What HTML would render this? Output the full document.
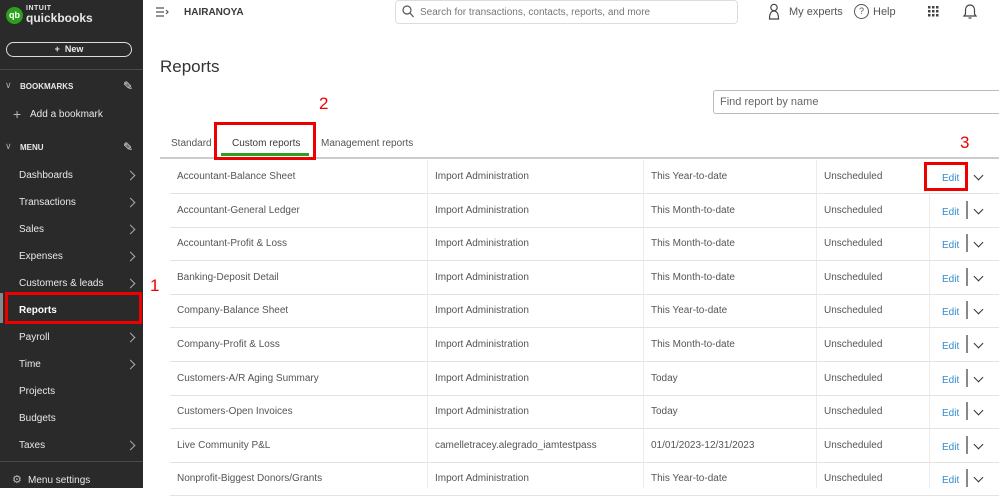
<!DOCTYPE html>
<html><head><meta charset="utf-8">
<style>
*{box-sizing:border-box;margin:0;padding:0}
body{width:999px;height:488px;overflow:hidden;font-family:"Liberation Sans",sans-serif;background:#fff;position:relative;color:#393a3d}
.sb{position:absolute;left:0;top:0;width:143px;height:488px;background:#2a2a2a;color:#e8e8e8}
.sb .t{position:absolute;font-size:11px}
.chev{position:absolute;left:127px;width:7px;height:7px;border-right:1.2px solid #aaa;border-top:1.2px solid #aaa;transform:rotate(45deg)}
.hl{position:absolute;left:0;width:143px;height:1px;background:#4a4a4a}
.a{position:absolute;font-size:11px;color:#393a3d}
.row{position:absolute;left:170px;width:829px;height:1px;background:#e3e3e3}
.vl{position:absolute;width:1px;background:#ececec}
.c{position:absolute;font-size:10px;color:#555}
.edit{position:absolute;left:942px;font-size:10px;color:#2f8ccf}
.dv{position:absolute;left:966px;width:1.5px;height:18px;background:#888}
.dch{position:absolute;left:975px;width:7px;height:7px;border-right:1.5px solid #333;border-bottom:1.5px solid #333;transform:rotate(45deg)}
.red{position:absolute;border:3px solid #e00;}
.num{position:absolute;color:#e00;font-size:17px}
</style></head><body>
<div class="sb">
  <div style="position:absolute;left:6px;top:7px;width:17px;height:17px;border-radius:50%;background:#2ca01c;color:#fff;font-size:9px;font-weight:bold;text-align:center;line-height:17px">qb</div>
  <div class="t" style="left:26px;top:5px;font-size:7px;font-weight:bold;letter-spacing:.5px">INTUIT</div>
  <div class="t" style="left:26px;top:11px;font-size:12px;font-weight:bold">quickbooks</div>
  <div style="position:absolute;left:6px;top:42px;width:126px;height:15px;border:1.5px solid #ddd;border-radius:8px;font-size:9px;font-weight:bold;text-align:center;line-height:12px">+ &nbsp;New</div>
  <div class="hl" style="top:69px"></div>
  <div class="t" style="left:5px;top:80px;font-size:9px;color:#aaa">&#8744;</div>
  <div class="t" style="left:20px;top:82px;font-size:8px;font-weight:bold">BOOKMARKS</div>
  <div class="t" style="left:123px;top:79px;font-size:12px">&#9998;</div>
  <div class="t" style="left:13px;top:106px;font-size:14px;color:#bbb">+</div>
  <div class="t" style="left:30px;top:109px;font-size:10px">Add a bookmark</div>
  <div class="t" style="left:5px;top:141px;font-size:9px;color:#aaa">&#8744;</div>
  <div class="t" style="left:20px;top:143px;font-size:8px;font-weight:bold">MENU</div>
  <div class="t" style="left:123px;top:140px;font-size:12px">&#9998;</div>
  <div class="t" style="left:19px;top:170px;font-size:10px">Dashboards</div><div class="chev" style="top:172px"></div>
  <div class="t" style="left:19px;top:197px;font-size:10px">Transactions</div><div class="chev" style="top:199px"></div>
  <div class="t" style="left:19px;top:224px;font-size:10px">Sales</div><div class="chev" style="top:226px"></div>
  <div class="t" style="left:19px;top:251px;font-size:10px">Expenses</div><div class="chev" style="top:253px"></div>
  <div class="t" style="left:19px;top:278px;font-size:10px">Customers &amp; leads</div><div class="chev" style="top:280px"></div>
  <div style="position:absolute;left:0;top:293px;width:3px;height:30px;background:#888"></div>
  <div class="t" style="left:19px;top:305px;font-size:10px;font-weight:bold;color:#fff">Reports</div>
  <div class="t" style="left:19px;top:332px;font-size:10px">Payroll</div><div class="chev" style="top:334px"></div>
  <div class="t" style="left:19px;top:359px;font-size:10px">Time</div><div class="chev" style="top:361px"></div>
  <div class="t" style="left:19px;top:386px;font-size:10px">Projects</div>
  <div class="t" style="left:19px;top:413px;font-size:10px">Budgets</div>
  <div class="t" style="left:19px;top:440px;font-size:10px">Taxes</div><div class="chev" style="top:442px"></div>
  <div class="hl" style="top:461px"></div>
  <div class="t" style="left:12px;top:473px;font-size:11px;color:#bbb">&#9881;</div>
  <div class="t" style="left:28px;top:475px;font-size:10px">Menu settings</div>
</div>
<div class="red" style="left:5px;top:292px;width:137px;height:32px"></div>
<div class="num" style="left:150px;top:276px">1</div>

<svg style="position:absolute;left:155px;top:6px" width="14" height="12"><path d="M1 2h8M1 6h8M1 10h8M11 4l2 2-2 2" stroke="#555" stroke-width="1.2" fill="none"/></svg>
<div class="a" style="left:184px;top:7px;font-size:10px;font-weight:bold">HAIRANOYA</div>
<div style="position:absolute;left:395px;top:0;width:343px;height:24px;border:1px solid #ddd;border-radius:4px"></div>
<svg style="position:absolute;left:402px;top:5px" width="12" height="13"><circle cx="5" cy="5" r="4" stroke="#555" stroke-width="1.2" fill="none"/><path d="M8 8l3.5 4" stroke="#555" stroke-width="1.3"/></svg>
<div class="a" style="left:420px;top:7px;font-size:10px;color:#777">Search for transactions, contacts, reports, and more</div>
<svg style="position:absolute;left:768px;top:3px" width="12" height="17"><circle cx="6" cy="4.5" r="3.2" stroke="#444" stroke-width="1.2" fill="none"/><path d="M6 8c-3 0-4.5 3-4.5 8h9c0-5-1.5-8-4.5-8z" stroke="#444" stroke-width="1.2" fill="none"/></svg>
<div class="a" style="left:789px;top:6px;font-size:11px;color:#555">My experts</div>
<div style="position:absolute;left:854px;top:4px;width:15px;height:15px;border:1.3px solid #555;border-radius:50%;font-size:9px;text-align:center;line-height:13px;color:#555">?</div>
<div class="a" style="left:873px;top:6px;font-size:11px;color:#555">Help</div>
<svg style="position:absolute;left:928px;top:6px" width="11" height="11" fill="#444"><rect x="0" y="0" width="2.5" height="2.5"/><rect x="4" y="0" width="2.5" height="2.5"/><rect x="8" y="0" width="2.5" height="2.5"/><rect x="0" y="4" width="2.5" height="2.5"/><rect x="4" y="4" width="2.5" height="2.5"/><rect x="8" y="4" width="2.5" height="2.5"/><rect x="0" y="8" width="2.5" height="2.5"/><rect x="4" y="8" width="2.5" height="2.5"/><rect x="8" y="8" width="2.5" height="2.5"/></svg>
<svg style="position:absolute;left:963px;top:3px" width="14" height="17"><path d="M7 2c-3 0-4.5 2.5-4.5 5v4L1 13h12l-1.5-2V7C11.5 4.5 10 2 7 2z" stroke="#444" stroke-width="1.2" fill="none"/><path d="M5.5 15h3" stroke="#444" stroke-width="1.2"/></svg>

<div class="a" style="left:160px;top:57px;font-size:17px;color:#333">Reports</div>
<div style="position:absolute;left:713px;top:90px;width:290px;height:24px;border:1px solid #bbb;border-radius:3px"></div>
<div class="a" style="left:720px;top:96px;font-size:11px;color:#666">Find report by name</div>
<div class="num" style="left:319px;top:94px">2</div>
<div class="num" style="left:960px;top:133px">3</div>
<div class="a" style="left:171px;top:138px;font-size:10px;color:#555">Standard</div>
<div class="a" style="left:232px;top:138px;font-size:10px">Custom reports</div>
<div class="a" style="left:321px;top:138px;font-size:10px;color:#555">Management reports</div>
<div style="position:absolute;left:160px;top:157px;width:839px;height:2px;background:#ccc"></div>
<div style="position:absolute;left:221px;top:153px;width:88px;height:3px;background:#2ca01c"></div>
<div class="red" style="left:214px;top:122px;width:102px;height:38px"></div>

<div class="vl" style="left:427px;top:160px;height:328px"></div>
<div class="vl" style="left:643px;top:160px;height:328px"></div>
<div class="vl" style="left:816px;top:160px;height:328px"></div>
<div class="vl" style="left:929px;top:193px;height:295px"></div>

<div id="rows"></div>
<script>
var d=[["Accountant-Balance Sheet","Import Administration","This Year-to-date"],
["Accountant-General Ledger","Import Administration","This Month-to-date"],
["Accountant-Profit & Loss","Import Administration","This Month-to-date"],
["Banking-Deposit Detail","Import Administration","This Month-to-date"],
["Company-Balance Sheet","Import Administration","This Year-to-date"],
["Company-Profit & Loss","Import Administration","This Month-to-date"],
["Customers-A/R Aging Summary","Import Administration","Today"],
["Customers-Open Invoices","Import Administration","Today"],
["Live Community P&L","camelletracey.alegrado_iamtestpass","01/01/2023-12/31/2023"],
["Nonprofit-Biggest Donors/Grants","Import Administration","This Year-to-date"]];
var h="";
d.forEach(function(r,i){
 var y=160+i*33.6;
 var ty=y+11;
 h+='<div class="c" style="left:177px;top:'+ty+'px">'+r[0].replace("&","&amp;")+'</div>';
 h+='<div class="c" style="left:435px;top:'+ty+'px">'+r[1]+'</div>';
 h+='<div class="c" style="left:651px;top:'+ty+'px">'+r[2]+'</div>';
 h+='<div class="c" style="left:824px;top:'+ty+'px">Unscheduled</div>';
 h+='<div class="edit" style="top:'+(ty+2)+'px">Edit</div>';
 if(i>0)h+='<div class="dv" style="top:'+(y+7)+'px"></div>';
 h+='<div class="dch" style="top:'+(y+12)+'px"></div>';
 h+='<div class="row" style="top:'+(y+33)+'px"></div>';
});
document.getElementById("rows").innerHTML=h;
</script>
<div class="red" style="left:924px;top:162px;width:44px;height:29px"></div>
</body></html>
